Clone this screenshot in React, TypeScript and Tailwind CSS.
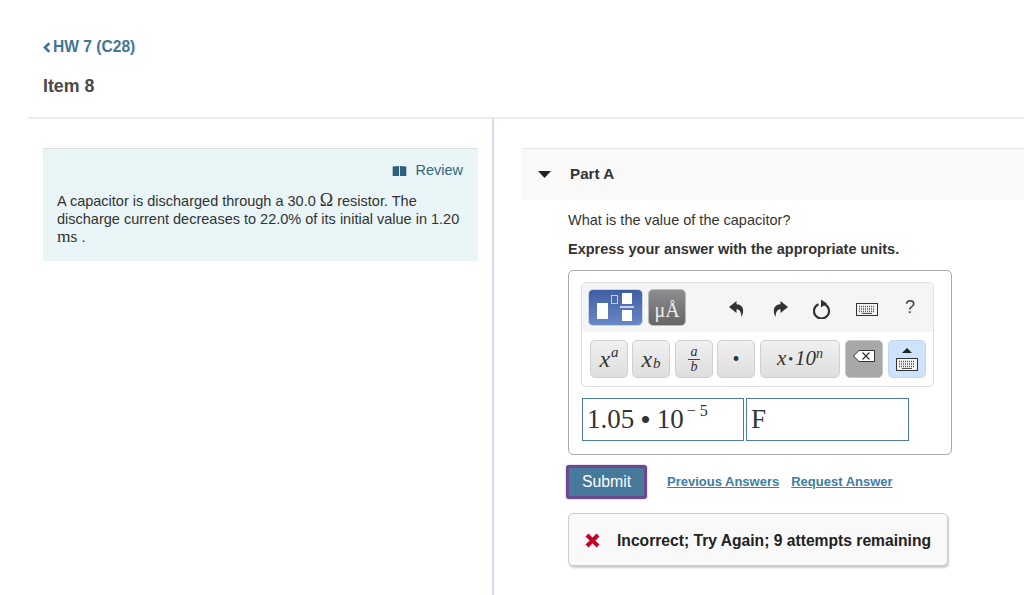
const SANS = "font-['Liberation_Sans',Arial,sans-serif]";

function KeyboardIcon({ className }: { className?: string }) {
  return (
    <svg viewBox="0 0 22 13" className={className}>
      <rect x="0.5" y="0.5" width="21" height="12" fill="#f4f4f4" stroke="#333" />
      <path d="M3 3.5h16M3 6h16M3 8.5h16" stroke="#555" strokeWidth="1.3" strokeDasharray="1 1" />
      <path d="M6 10.5h10" stroke="#555" strokeWidth="1" />
    </svg>
  );
}

function TemplateIcon() {
  return (
    <svg viewBox="0 0 37 29" className="w-[37px] h-[29px]">
      <rect x="0" y="10" width="11" height="16" fill="#fff" />
      <rect x="14.5" y="2.5" width="6" height="8" fill="none" stroke="#c3d0ea" strokeWidth="1" />
      <rect x="25" y="0" width="10" height="11" fill="#fff" />
      <rect x="23" y="13" width="14" height="2" fill="#c3d0ea" />
      <rect x="25" y="17" width="10" height="11" fill="#fff" />
    </svg>
  );
}

function MathKey({ children, className }: { children: React.ReactNode; className?: string }) {
  return (
    <div
      className={`h-[38px] flex items-center justify-center rounded-[5px] border border-[#d0d0d0] bg-gradient-to-b from-[#f0f0f0] to-[#dedede] font-['Liberation_Serif',serif] italic text-[#333] ${className ?? "w-[38px]"}`}
    >
      {children}
    </div>
  );
}

export default function App() {
  return (
    <div className={`${SANS} w-[1024px] h-[595px] overflow-hidden bg-white text-[#333]`}>
      <div className="pl-[43px] pt-[38px] h-[117px]">
        <div className="flex items-center h-[18px] text-[15.6px] font-bold text-[#3f7696]">
          <svg viewBox="0 0 8 12" className="w-[8px] h-[11px] mr-[2px]">
            <path d="M6.5 1.2 1.800 6l4.700 4.800" fill="none" stroke="#3f7696" strokeWidth="3" />
          </svg>
          HW 7 (C28)
        </div>
        <h1 className="mt-[19px] text-[17.8px] leading-[22px] font-bold text-[#4a4a4a]">Item 8</h1>
      </div>

      <div className="ml-[28px] h-[2px] bg-[#e8ebef]" />

      <div className="flex h-[476px]">
        {/* Left column */}
        <div className="w-[464px] ml-[28px] pl-[15px] pr-[14px] pt-[29px] shrink-0">
          <div className="h-[113px] border-t border-[#dddddd] bg-[#e9f5f6] px-[14px] pt-[13px]">
            <div className="flex items-center justify-end h-[18px] pr-[1px] text-[14.5px] text-[#336683]">
              <svg viewBox="0 0 15 11" className="w-[15px] h-[10px] mr-[8px]">
                <path d="M0 0.500 7 0v11l-7 .0zM8 0l7 .5V11H8z" fill="#2f5f7c" />
              </svg>
              Review
            </div>
            <p className="mt-[11px] text-[14.5px] leading-[18px] text-[#333]">
              A capacitor is discharged through a 30.0{" "}
              <span className="font-['Liberation_Serif',serif] text-[18px] leading-none">Ω</span> resistor. The
              <br />
              discharge current decreases to 22.0% of its initial value in 1.20
              <br />
              <span className="font-['Liberation_Serif',serif] text-[17.5px] leading-none">ms</span> .
            </p>
          </div>
        </div>

        <div className="w-[2px] bg-[#d5dde8] shrink-0" />

        {/* Right column */}
        <div className="flex-1 pl-[28px] pt-[29px]">
          <div className="h-[52px] border-t border-[#e3e6ea] bg-[#f9f9f9] flex items-center">
            <svg viewBox="0 0 13 7" className="ml-[16px] w-[13px] h-[7px]">
              <path d="M0 0h13L6.500 7z" fill="#222" />
            </svg>
            <span className="ml-[19px] text-[15.2px] font-bold text-[#333]">Part A</span>
          </div>

          <div className="pl-[46px]">
            <p className="mt-[11px] h-[18px] text-[14.5px] leading-[18px]">What is the value of the capacitor?</p>
            <p className="mt-[11px] h-[18px] text-[14.5px] leading-[18px] font-bold">Express your answer with the appropriate units.</p>

            <div className="mt-[12px] w-[384px] h-[185px] border border-[#aaaaaa] rounded-[5px] pl-[12px] pt-[11px]">
              <div className="w-[353px] h-[105px] border border-[#dfdfdf] rounded-[5px] overflow-hidden">
                <div className="h-[49px] bg-[#f5f5f5] flex items-center pl-[6px]">
                  <div className="w-[55px] h-[37px] rounded-[5px] bg-gradient-to-b from-[#3f5fa3] to-[#6a87c6] border border-[#c9d2e2] flex items-center justify-center">
                    <TemplateIcon />
                  </div>
                  <div className="ml-[5px] w-[38px] h-[37px] rounded-[5px] bg-gradient-to-b from-[#8d8d8d] to-[#666] border border-[#bbb] flex items-center justify-center font-['Liberation_Serif',serif] text-[#eee] text-[20px] pt-[4px]">
                    μÅ
                  </div>
                  <svg viewBox="0 0 16 17" className="ml-[43px] w-[16px] h-[18px] mt-[2px]">
                    <path d="M7.500 0.500 0 6.500l7.500 6V8.800c3 0 4.500 2 5 7.700 3.200-6.500 2-12.500-5-12.800z" fill="#333" />
                  </svg>
                  <svg viewBox="0 0 16 17" className="ml-[27px] w-[16px] h-[18px] mt-[2px]">
                    <path d="M8.500 0.500 16 6.500l-7.500 6V8.800c-3 0-4.500 2-5 7.700-3.200-6.500-2-12.500 5-12.800z" fill="#333" />
                  </svg>
                  <svg viewBox="0 0 18 20" className="ml-[25px] w-[18px] h-[20px] mt-[2px]">
                    <path d="M5.500 5.200a7.500 7.500 0 1 0 6 0" fill="none" stroke="#333" strokeWidth="2.200" />
                    <path d="M8 0.500v8l6-4z" fill="#333" />
                  </svg>
                  <KeyboardIcon className="ml-[25px] w-[22px] h-[13px] mt-[4px]" />
                  <span className="ml-[27px] text-[18px] text-[#444]">?</span>
                </div>
                <div className="h-[54px] flex items-center pl-[8px]">
                  <MathKey className="w-[38px] text-[24px]">
                    x<sup className="text-[15px] -top-[7px] ml-[1px]">a</sup>
                  </MathKey>
                  <MathKey className="w-[38px] ml-[4px] text-[24px]">
                    x<sub className="text-[15px] -bottom-[4px] ml-[1px]">b</sub>
                  </MathKey>
                  <MathKey className="w-[38px] ml-[5px] flex-col text-[14px] leading-[12px]">
                    <span>a</span>
                    <span className="w-[12px] h-px bg-[#444] my-[1px]" />
                    <span>b</span>
                  </MathKey>
                  <MathKey className="w-[38px] ml-[4px] text-[20px] not-italic">•</MathKey>
                  <MathKey className="w-[80px] ml-[5px] text-[21px]">
                    x<span className="not-italic text-[14px] mx-[2px]">•</span>10<sup className="text-[14px] -top-[5px]">n</sup>
                  </MathKey>
                  <div className="ml-[5px] w-[38px] h-[38px] rounded-[5px] bg-[#a8a8a8] border border-[#c4c4c4] flex items-center justify-center">
                    <svg viewBox="0 0 22 12" className="w-[22px] h-[12px] -mt-[6px]">
                      <path d="M6 .5h15.500v11H6L.5 6z" fill="#fff" stroke="#333" />
                      <path d="M9.500 2.500l7 7M16.500 2.500l-7 7" stroke="#333" strokeWidth="1.200" />
                    </svg>
                  </div>
                  <div className="ml-[5px] w-[38px] h-[38px] rounded-[5px] bg-[#cfe2fb] border border-[#c4d6ee] flex flex-col items-center justify-center">
                    <svg viewBox="0 0 10 5" className="w-[10px] h-[5px] mb-[5px]">
                      <path d="M0 5h10L5 0z" fill="#222" />
                    </svg>
                    <KeyboardIcon className="w-[22px] h-[13px]" />
                  </div>
                </div>
              </div>

              <div className="mt-[11px] ml-[1px] flex font-['Liberation_Serif',serif] text-[27px] text-[#333]">
                <div className="w-[162px] h-[43px] border border-[#4a7d9e] pl-[4px] flex items-center">
                  1.05
                  <span className="mx-[6px] text-[30px] leading-none">•</span>
                  10
                  <span className="ml-[3px] text-[16px] leading-none -mt-[18px]">− 5</span>
                </div>
                <div className="ml-[2px] w-[163px] h-[43px] border border-[#4a7d9e] pl-[4px] flex items-center">F</div>
              </div>
            </div>

            <div className="flex items-center mt-[10px] -ml-[2px] h-[34px]">
              <div className="w-[81px] h-[34px] rounded-[3px] border-[3px] border-[#6a4a8c] bg-[#47799b] flex items-center justify-center text-[15.8px] text-white shadow-[0_0_2px_#b48ccb]">
                Submit
              </div>
              <span className="ml-[20px] text-[13px] font-bold text-[#3f7ca3] underline">Previous Answers</span>
              <span className="ml-[12px] text-[13px] font-bold text-[#3f7ca3] underline">Request Answer</span>
            </div>

            <div className="mt-[14px] w-[380px] h-[53px] rounded-[5px] border border-[#cccccc] bg-[#f9f9f9] shadow-[1px_2px_2px_rgba(0,0,0,0.2)] flex items-center pl-[16px] pt-[2px]">
              <svg viewBox="0 0 15 15" className="w-[15px] h-[15px]">
                <path d="M2 2l11 11M13 2 2 13" stroke="#c4002b" strokeWidth="4" />
              </svg>
              <span className="ml-[17px] text-[15.65px] font-bold text-[#222]">Incorrect; Try Again; 9 attempts remaining</span>
            </div>
          </div>
        </div>
      </div>
    </div>
  );
}
